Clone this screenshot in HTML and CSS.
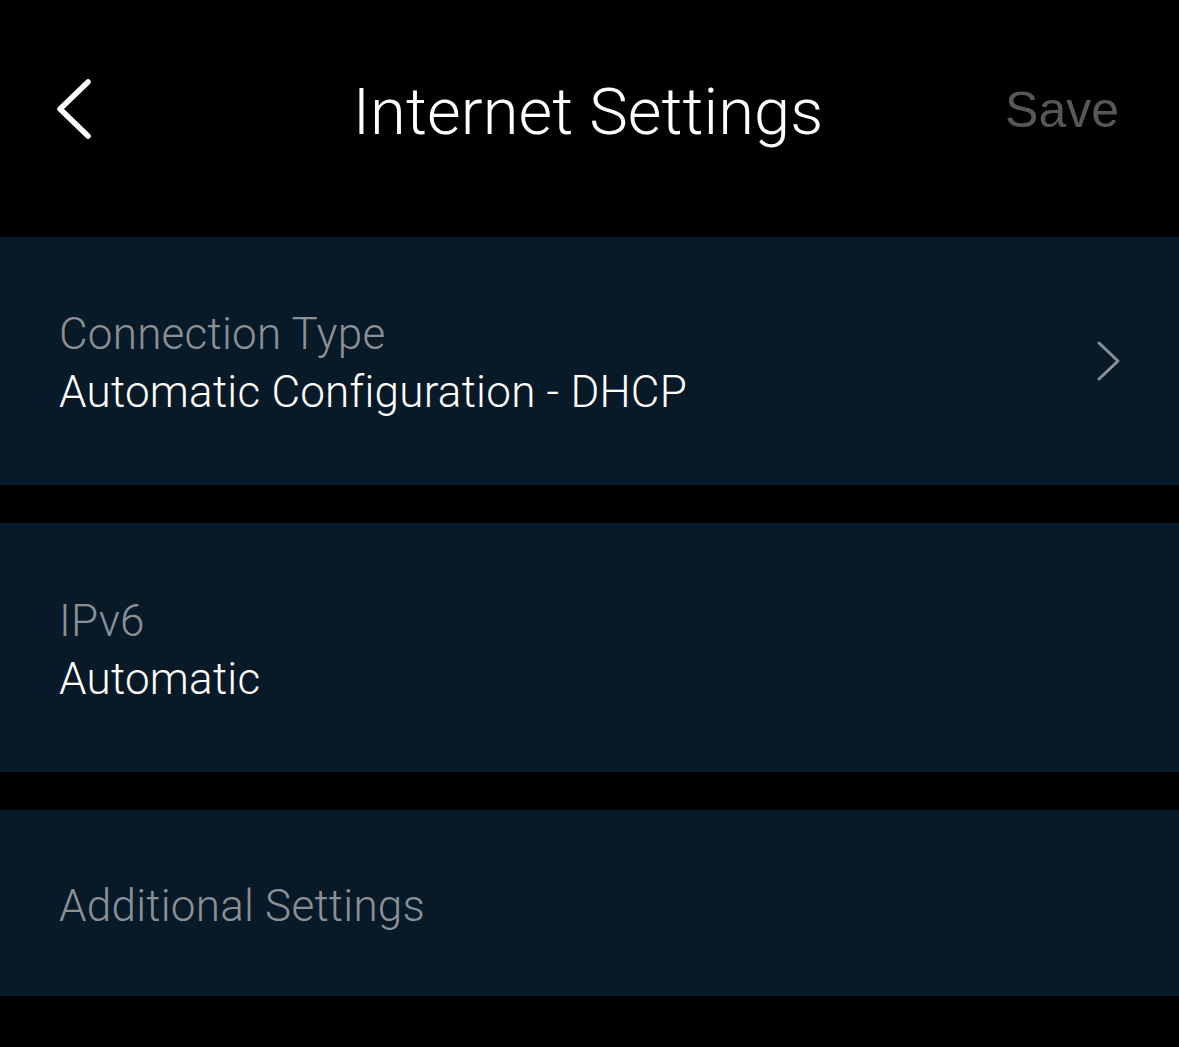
FILE: index.html
```html
<!DOCTYPE html>
<html lang="en">
<head>
<meta charset="utf-8">
<title>Internet Settings</title>
<link rel="stylesheet" href="styles.css">
</head>
<body>
<div class="screen">
  <header class="topbar">
    <button class="back" aria-label="Back">
      <svg width="40" height="64" viewBox="0 0 40 64"><path d="M31 4 L3 31 L31 58" fill="none" stroke="#ffffff" stroke-width="5.5" stroke-linecap="round" stroke-linejoin="round"/></svg>
    </button>
    <h1 class="title">Internet Settings</h1>
    <span class="save">Save</span>
  </header>
  <main class="list">
    <section class="card card-tall">
      <div class="card-text">
        <div class="label">Connection Type</div>
        <div class="value">Automatic Configuration - DHCP</div>
      </div>
      <svg class="chev" width="30" height="44" viewBox="0 0 30 44"><path d="M6 4 L25 22 L6 40" fill="none" stroke="#8a9096" stroke-width="3" stroke-linecap="round" stroke-linejoin="round"/></svg>
    </section>
    <section class="card card-tall">
      <div class="card-text">
        <div class="label">IPv6</div>
        <div class="value">Automatic</div>
      </div>
    </section>
    <section class="card card-short">
      <div class="card-text">
        <div class="label">Additional Settings</div>
      </div>
    </section>
  </main>
</div>
</body>
</html>
```
FILE: styles.css
```css
* { box-sizing: border-box; }
html, body {
  margin: 0;
  padding: 0;
  background: #000;
}
body {
  font-family: Roboto, "Liberation Sans", sans-serif;
  color: #fff;
  width: 1179px;
  height: 1047px;
  overflow: hidden;
}
.topbar {
  height: 237px;
  display: grid;
  grid-template-columns: 1fr auto 1fr;
  align-items: start;
  padding: 0 60px 0 57px;
}
.back {
  justify-self: start;
  background: none;
  border: 0;
  padding: 0;
  margin-top: 78px;
  width: 40px;
  height: 64px;
  display: block;
}
.back svg { display: block; }
.title {
  margin: 0;
  text-align: center;
  font-weight: 300;
  font-size: 65px;
  line-height: 1;
  padding-top: 80px;
  letter-spacing: 0.1px;
}
.save {
  justify-self: end;
  font-family: "Liberation Sans", Arial, sans-serif;
  font-size: 50px;
  line-height: 1;
  color: #575757;
  padding-top: 85px;
}
.list {
  display: flex;
  flex-direction: column;
  gap: 38px;
}
.card {
  background: #081a27;
  display: flex;
  align-items: center;
  padding: 0 56px 0 59px;
}
.card-tall { height: 248px; padding-top: 4px; }
.card-tall + .card-tall { height: 249px; }
.card-short { height: 186px; padding-top: 6px; }
.card-text { flex: 1; }
.label {
  color: #8b9096;
  font-size: 44px;
  font-weight: 300;
  line-height: 58px;
  letter-spacing: 0.25px;
}
.value {
  color: #fff;
  font-size: 44px;
  font-weight: 300;
  line-height: 58px;
  letter-spacing: 0.25px;
}
.chev { display: block; margin-top: -4px; }
```
